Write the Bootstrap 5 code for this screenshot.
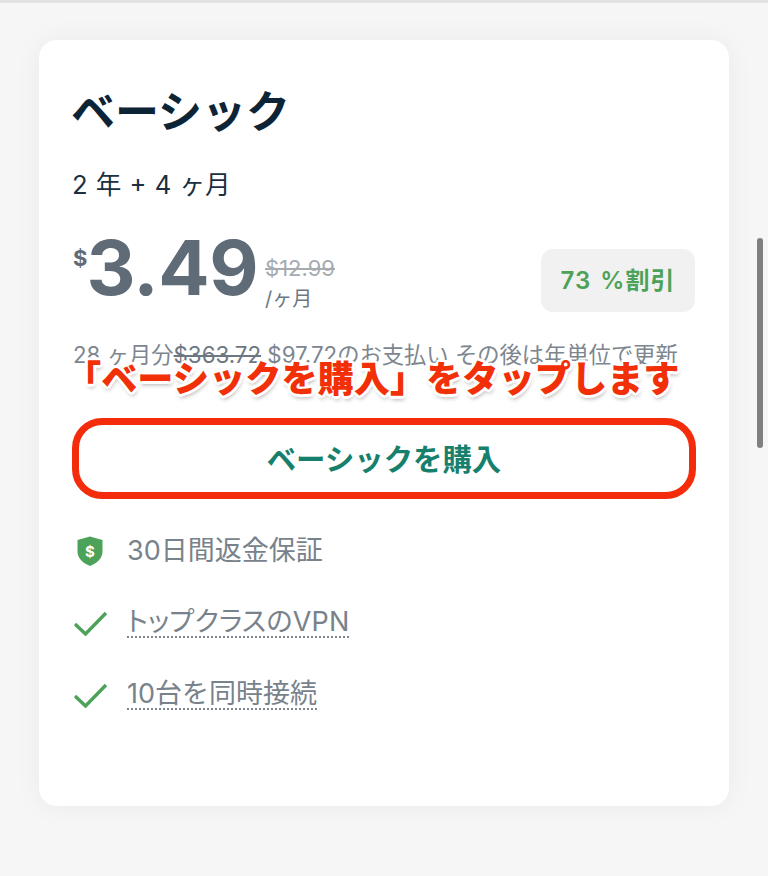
<!DOCTYPE html>
<html lang="ja">
<head>
<meta charset="utf-8">
<title>ベーシック</title>
<link rel="stylesheet" href="https://cdn.jsdelivr.net/npm/bootstrap@5.3.0/dist/css/bootstrap.min.css">
<style>
html,body{height:876px;overflow:hidden}
body{background:#f6f6f6;font-family:"Inter","Noto Sans CJK JP",sans-serif;position:relative}
.topline{height:3px;background:#e2e2e2;margin-bottom:37px}
.plan{width:690px;height:766px;margin-left:39px;background:#fff;border-radius:18px;box-shadow:0 0 28px rgba(0,0,0,.05);padding:39px 34px 0;position:relative;border:0}
.plan-name{font-size:44px;font-weight:700;line-height:60px;color:#0d2436;margin:0 0 28px -2px;font-family:"Noto Sans CJK JP",sans-serif}
.plan-term{font-size:25.6px;line-height:36px;color:#1b2f3f;margin:0 0 27px -1px;word-spacing:1px}
.price-row{height:99px}
.cur{font-size:22px;font-weight:700;color:#5f6b76;line-height:1;margin-top:17px;margin-right:-1px}
.amount{font-size:76px;font-weight:700;color:#5f6b76;line-height:76px;letter-spacing:-.5px;margin-top:-1px}
.price-side{margin-left:7px;margin-top:23px;color:#6d7781}
.old{font-size:22px;line-height:30px;color:#a5abb1;text-decoration:line-through}
.per{font-size:20px;line-height:30px;margin-top:1px}
.off{width:154px;height:63px;background:#f1f1f1;border-radius:12px;color:#4da25a;font-size:24px;font-weight:600;margin-top:19px;letter-spacing:1px;word-spacing:2px}
.bill{font-size:22.3px;line-height:32px;color:#7d868f;white-space:nowrap;margin:10px 0 0 0;height:32px}
.bill s{color:#6d7781}
.buy{display:block;width:624px;height:81px;margin:47px 0 0 -1px;border:7px solid #f42c0c;border-radius:30px;background:#fff;color:#17806d;font-size:29.4px;font-weight:700;padding:0 0 3px;font-family:"Noto Sans CJK JP",sans-serif}
.buy:hover{background:#fff;color:#17806d;border-color:#f42c0c}
.feats{margin-top:33px;gap:34px}
.feat{font-size:27px;height:38px;line-height:38px;color:#78828b}
.ico{width:54px;flex:none}
.dot{border-bottom:2px dotted #7d868f;line-height:28px}
.tight{font-feature-settings:"palt";letter-spacing:.2px}
.caption{position:absolute;left:26px;top:314px;font-size:36.2px;line-height:44px;font-weight:900;color:#f23008;white-space:nowrap;font-family:"Noto Sans CJK JP",sans-serif;text-shadow:3px 0 0 #fff,-3px 0 0 #fff,0 3px 0 #fff,0 -3px 0 #fff,2px 2px 0 #fff,-2px 2px 0 #fff,2px -2px 0 #fff,-2px -2px 0 #fff,1px 4px 4px rgba(0,0,0,.3)}
.thumb{position:absolute;left:757px;top:238px;width:6px;height:210px;background:#808080;border-radius:3px}
</style>
</head>
<body>
<div class="topline"></div>
<div class="plan">
  <h2 class="plan-name">ベーシック</h2>
  <div class="plan-term">2 年 + 4 ヶ月</div>
  <div class="price-row d-flex align-items-start">
    <span class="cur">$</span>
    <span class="amount">3.49</span>
    <div class="price-side">
      <div class="old">$12.99</div>
      <div class="per">/ヶ月</div>
    </div>
    <div class="off ms-auto d-flex align-items-center justify-content-center">73 %割引</div>
  </div>
  <p class="bill">28 ヶ月分<s>$363.72</s> $97.72のお支払い その後は年単位で更新</p>
  <button type="button" class="btn buy">ベーシックを購入</button>
  <div class="feats d-flex flex-column">
    <div class="feat d-flex align-items-center">
      <span class="ico d-flex"><svg width="34" height="32" viewBox="0 0 34 32"><path d="M17 1.5 29.5 5v11.5c0 6.800-5.400 11.600-12.500 14.500C9.900 28.100 4.500 23.300 4.500 16.500V5Z" fill="#4da25a"/><text x="17" y="21.500" text-anchor="middle" font-size="15" font-weight="700" fill="#fff" font-family="Inter,sans-serif">$</text></svg></span>
      <span>30日間返金保証</span>
    </div>
    <div class="feat d-flex align-items-center">
      <span class="ico d-flex"><svg width="35" height="25" viewBox="0 0 35 25" class="chk"><path d="M2 13 12.500 23 33 2" fill="none" stroke="#4da25a" stroke-width="3.400"/></svg></span>
      <span class="dot tight">トップクラスのVPN</span>
    </div>
    <div class="feat d-flex align-items-center">
      <span class="ico d-flex"><svg width="35" height="25" viewBox="0 0 35 25" class="chk"><path d="M2 13 12.500 23 33 2" fill="none" stroke="#4da25a" stroke-width="3.400"/></svg></span>
      <span class="dot">10台を同時接続</span>
    </div>
  </div>
  <div class="caption">「ベーシックを購入」をタップします</div>
</div>
<div class="thumb"></div>
<script src="https://cdn.jsdelivr.net/npm/bootstrap@5.3.0/dist/js/bootstrap.bundle.min.js"></script>
</body>
</html>
